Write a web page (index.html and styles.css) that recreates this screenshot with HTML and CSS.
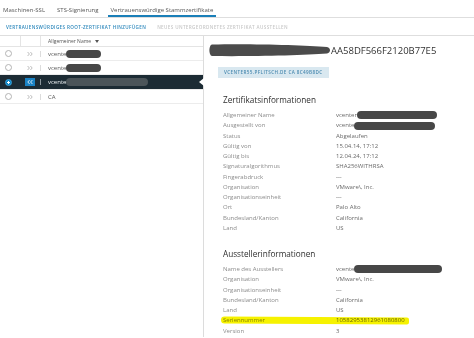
FILE: index.html
```html
<!DOCTYPE html>
<html lang="de">
<head>
  <meta charset="UTF-8">
  <meta name="viewport" content="width=device-width, initial-scale=1.0">
  <title>Zertifikatsverwaltung</title>
  <link rel="stylesheet" href="styles.css">
</head>
<body>
  <nav class="tabs">
    <a class="tab" href="#">Maschinen-SSL</a>
    <a class="tab" href="#">STS-Signierung</a>
    <a class="tab active" href="#">Vertrauenswürdige Stammzertifikate</a>
  </nav>
  <div class="toolbar">
    <button class="link">Vertrauenswürdiges Root-Zertifikat hinzufügen</button>
    <button class="link" disabled>Neues untergeordnetes Zertifikat ausstellen</button>
  </div>
  <div class="main">
    <div class="grid">
      <div class="grid-head">
        <div class="cell"></div>
        <div class="cell sep"></div>
        <div class="cell sep name-head">Allgemeiner Name
          <svg class="filter" width="4" height="3" viewBox="0 0 4 3"><path d="M0 0H4L2 3Z" fill="#555"/></svg>
        </div>
      </div>
      <div class="grid-row">
        <span class="radio"></span>
        <svg class="expand" width="6" height="6" viewBox="0 0 6 6"><path d="M0.6 1L2.4 3L0.6 5M3.4 1L5.2 3L3.4 5" fill="none" stroke="#a0a0a0" stroke-width="0.7"/></svg>
        <div class="name">vcente<span class="redact" style="width: 35px"></span></div>
      </div>
      <div class="grid-row">
        <span class="radio"></span>
        <svg class="expand" width="6" height="6" viewBox="0 0 6 6"><path d="M0.6 1L2.4 3L0.6 5M3.4 1L5.2 3L3.4 5" fill="none" stroke="#a0a0a0" stroke-width="0.7"/></svg>
        <div class="name">vcente<span class="redact" style="width: 35px"></span></div>
      </div>
      <div class="grid-row selected">
        <span class="radio checked"></span>
        <span class="expand-box">
          <svg width="6" height="6" viewBox="0 0 6 6"><path d="M2.6 1L0.8 3L2.6 5M5.4 1L3.6 3L5.4 5" fill="none" stroke="#fff" stroke-width="0.8"/></svg>
        </span>
        <div class="name">vcente<span class="redact dim" style="width: 82px"></span></div>
      </div>
      <div class="grid-row">
        <span class="radio"></span>
        <svg class="expand" width="6" height="6" viewBox="0 0 6 6"><path d="M0.6 1L2.4 3L0.6 5M3.4 1L5.2 3L3.4 5" fill="none" stroke="#a0a0a0" stroke-width="0.7"/></svg>
        <div class="name">CA</div>
      </div>
    </div>

    <section class="detail">
      <div class="detail-title">
        <svg class="title-redact" width="123" height="14" viewBox="0 0 123 14"><path d="M4 1.5C40 0.5 95 2 119 4C123 4.5 123 10 119 10.5C95 12.5 40 13.5 4 13C0.5 12.5 0.5 2 4 1.5Z" fill="#4b4b4b"/></svg>
        <span>AA58DF566F2120B77E5</span>
      </div>
      <span class="badge">vcenter55.pflitsch.de CA 8C49B8DC</span>

      <div class="info">
        <h2>Zertifikatsinformationen</h2>
        <div class="row"><span class="label">Allgemeiner Name</span><span class="value">vcenter<span class="redact" style="width: 80px"></span></span></div>
        <div class="row"><span class="label">Ausgestellt von</span><span class="value">vcente<span class="redact" style="width: 81px"></span></span></div>
        <div class="row"><span class="label">Status</span><span class="value">Abgelaufen</span></div>
        <div class="row"><span class="label">Gültig von</span><span class="value">15.04.14, 17:12</span></div>
        <div class="row"><span class="label">Gültig bis</span><span class="value">12.04.24, 17:12</span></div>
        <div class="row"><span class="label">Signaturalgorithmus</span><span class="value">SHA256WITHRSA</span></div>
        <div class="row"><span class="label">Fingerabdruck</span><span class="value">---</span></div>
        <div class="row"><span class="label">Organisation</span><span class="value">VMware\, Inc.</span></div>
        <div class="row"><span class="label">Organisationseinheit</span><span class="value">---</span></div>
        <div class="row"><span class="label">Ort</span><span class="value">Palo Alto</span></div>
        <div class="row"><span class="label">Bundesland/Kanton</span><span class="value">California</span></div>
        <div class="row"><span class="label">Land</span><span class="value">US</span></div>

        <h2 class="second">Ausstellerinformationen</h2>
        <div class="row"><span class="label">Name des Ausstellers</span><span class="value">vcente<span class="redact" style="width: 88px"></span></span></div>
        <div class="row"><span class="label">Organisation</span><span class="value">VMware\, Inc.</span></div>
        <div class="row"><span class="label">Organisationseinheit</span><span class="value">---</span></div>
        <div class="row"><span class="label">Bundesland/Kanton</span><span class="value">California</span></div>
        <div class="row"><span class="label">Land</span><span class="value">US</span></div>
        <div class="row marked"><span class="label">Seriennummer</span><span class="value">10582953812961080800</span></div>
        <div class="row"><span class="label">Version</span><span class="value">3</span></div>
      </div>
    </section>
  </div>
</body>
</html>
```

FILE: styles.css
```css
body {
  margin: 0;
  width: 474px;
  height: 338px;
  overflow: hidden;
  font-family: 'Open Sans', 'Liberation Sans', sans-serif;
  color: #565656;
  background-color: #ffffff;
}
.tabs {
  display: flex;
  gap: 6px;
  height: 17px;
  border-bottom: 1px solid #dedede;
}
.tab {
  padding: 3px 3px 0;
  font-size: 6px;
  line-height: 14px;
  color: #565656;
  text-decoration: none;
  white-space: nowrap;
}
.tab.active {
  box-shadow: inset 0 -2px 0 #1a7fb8;
}
.toolbar {
  display: flex;
  align-items: center;
  gap: 11px;
  height: 18px;
  padding: 1px 0 0 6px;
  box-sizing: border-box;
  border-bottom: 1px solid #dedede;
}
.link {
  padding: 0;
  border: none;
  background: none;
  font-family: inherit;
  font-size: 4.6px;
  font-weight: 600;
  letter-spacing: 0.36px;
  text-transform: uppercase;
  color: #2a86bb;
  white-space: nowrap;
}
.link:disabled {
  color: #c8c8c8;
}
.main {
  display: flex;
  height: 301px;
}
.grid {
  width: 203px;
  flex-shrink: 0;
  border-right: 1px solid #dcdcdc;
}
.grid-head,
.grid-row {
  display: grid;
  grid-template-columns: 20px 20px 1fr;
  align-items: center;
}
.grid-head {
  height: 10px;
  border-bottom: 1px solid #e4e4e4;
  font-size: 5px;
  color: #555555;
}
.grid-head .cell {
  height: 100%;
  display: flex;
  align-items: center;
}
.grid-head .sep {
  border-left: 1px solid #e4e4e4;
}
.name-head {
  padding-left: 7px;
  gap: 4px;
}
.grid-row {
  position: relative;
  height: 13px;
  border-bottom: 1px solid #ececec;
  font-size: 6px;
}
.radio {
  width: 5px;
  height: 5px;
  margin-left: 5px;
  border: 1px solid #b4b4b4;
  border-radius: 50%;
}
.radio.checked {
  border-color: #3aa3dc;
  background: radial-gradient(circle, #ffffff 0 1px, #0a86c8 1.4px);
}
.expand {
  justify-self: center;
}
.expand-box {
  justify-self: center;
  width: 10px;
  height: 8px;
  display: flex;
  align-items: center;
  justify-content: center;
  background-color: #1a82c4;
}
.name {
  border-left: 1px solid #dcdcdc;
  line-height: 6px;
  padding-left: 7px;
  white-space: nowrap;
  color: #5a5a5a;
}
.redact {
  display: inline-block;
  height: 8px;
  margin: -2px 0 -2px 0;
  vertical-align: middle;
  border-radius: 5px;
  background-color: #474747;
}
.redact.dim {
  background-color: #4b5459;
}
.grid-row.selected {
  height: 14px;
  background-color: #1c2b34;
}
.grid-row.selected .name {
  color: #eef2f4;
  border-left-color: #8a959b;
}
.grid-row.selected::after {
  content: '';
  position: absolute;
  right: -1px;
  top: 3px;
  border-top: 4.5px solid transparent;
  border-bottom: 4.5px solid transparent;
  border-right: 5px solid #ffffff;
}
.detail {
  flex: 1;
  padding-top: 7px;
}
.detail-title {
  display: flex;
  align-items: center;
  margin-left: 4px;
  height: 14px;
  font-size: 9.5px;
  color: #333333;
  white-space: nowrap;
}
.badge {
  display: inline-block;
  margin: 9px 0 0 14px;
  padding: 0 6px;
  height: 11px;
  line-height: 11px;
  background-color: #d9e8f0;
  font-size: 4.6px;
  font-weight: 600;
  letter-spacing: 0.4px;
  text-transform: uppercase;
  color: #4a8ab0;
  white-space: nowrap;
}
.info {
  padding-left: 19px;
}
.info h2 {
  margin: 15px 0 5px;
  font-size: 8.2px;
  font-weight: 400;
  line-height: 11px;
  color: #2e2e2e;
}
.info h2.second {
  margin: 14.5px 0 5.5px;
}
.row {
  position: relative;
  display: grid;
  grid-template-columns: 113px 1fr;
  font-size: 6px;
  line-height: 10.25px;
  white-space: nowrap;
}
.label {
  color: #8c8c8c;
}
.value {
  color: #6a6a6a;
}
.row.marked::before {
  content: '';
  position: absolute;
  left: -2px;
  top: 1.5px;
  width: 188px;
  height: 7px;
  border-radius: 5px 3px 3px 5px;
  background-color: #f6f200;
  mix-blend-mode: multiply;
  transform: rotate(0.3deg);
}
```
